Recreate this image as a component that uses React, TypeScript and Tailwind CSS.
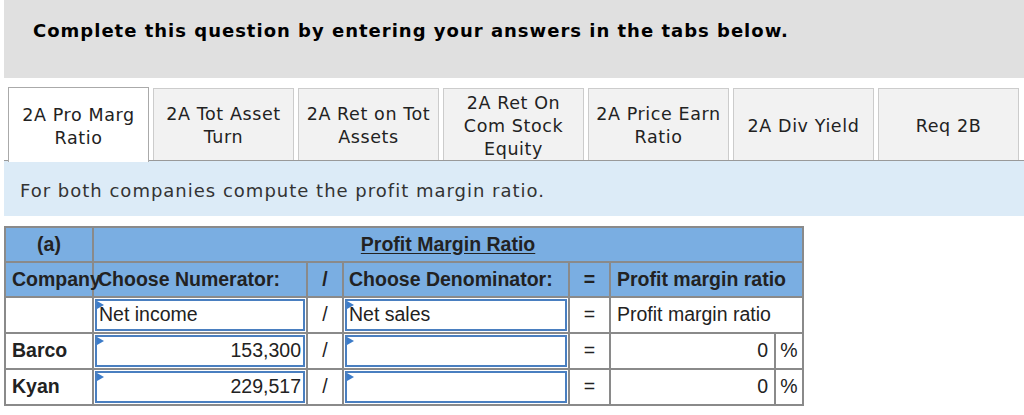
import React from "react";

const tabs = [
  "2A Pro Marg Ratio",
  "2A Tot Asset Turn",
  "2A Ret on Tot Assets",
  "2A Ret On Com Stock Equity",
  "2A Price Earn Ratio",
  "2A Div Yield",
  "Req 2B",
];

function Marker() {
  return (
    <span className="absolute left-0 top-0 w-0 h-0 border-t-[4px] border-b-[4px] border-l-[7px] border-t-transparent border-b-transparent border-l-[#3d7cc9]" />
  );
}

function Input({ text, align = "left" }: { text?: string; align?: "left" | "right" }) {
  return (
    <div
      className={`relative mx-[1px] h-[32px] border-2 border-[#4a7fc0] bg-white flex items-center px-[2px] ${
        align === "right" ? "justify-end" : "justify-start"
      }`}
    >
      <Marker />
      <span>{text}</span>
    </div>
  );
}

export default function App() {
  const cell = "border-2 border-[#8a8a8a] h-[35px] p-0";
  const dcell = "border-2 border-[#8a8a8a] h-[36px] p-0";
  return (
    <div className="w-[1024px] h-[415px] overflow-hidden bg-white" style={{ fontFamily: '"DejaVu Sans", Verdana, sans-serif' }}>
      <div className="ml-[4px] h-[78px] bg-[#e0e0e0] pl-[29px] pt-[19px]">
        <div className="font-bold text-[18px] tracking-[1px] text-black leading-[24px]">
          Complete this question by entering your answers in the tabs below.
        </div>
      </div>

      <div className="mt-[10px] ml-[4px] flex items-end gap-[4px] pl-[4px] border-b border-[#999] h-[73px]">
        {tabs.map((t, i) => (
          <div
            key={t}
            className={
              i === 0
                ? "relative z-10 mb-[-2px] w-[141px] h-[75px] bg-white border border-[#aaa] border-b-0 flex items-center justify-center text-center text-[17.5px] tracking-[0.6px] leading-[23px] text-[#222] px-[6px] pt-[3px]"
                : "w-[141px] h-[72px] bg-[#f2f2f2] border border-[#ccc] border-b-0 flex items-center justify-center text-center text-[17.5px] tracking-[0.6px] leading-[23px] text-[#222] px-[6px] pt-[3px]"
            }
          >
            {t}
          </div>
        ))}
      </div>

      <div className="ml-[4px] h-[55px] bg-[#dcebf7] pl-[16px] pt-[3px] flex items-center text-[18px] tracking-[1px] text-[#333]">
        For both companies compute the profit margin ratio.
      </div>

      <table
        className="mt-[10px] ml-[4px] w-[798px] table-fixed border-collapse text-[19.5px] text-[#222]"
        style={{ fontFamily: '"Liberation Sans", Arial, sans-serif' }}
      >
        <colgroup>
          <col className="w-[88px]" />
          <col className="w-[214px]" />
          <col className="w-[36px]" />
          <col className="w-[226px]" />
          <col className="w-[41px]" />
          <col className="w-[165px]" />
          <col className="w-[28px]" />
        </colgroup>
        <tbody>
          <tr className="bg-[#7aaee2] font-bold">
            <td className={`${cell} h-[33px] text-center`}>(a)</td>
            <td className={`${cell} h-[33px] text-center`} colSpan={6}>
              <span className="underline underline-offset-2">Profit Margin Ratio</span>
            </td>
          </tr>
          <tr className="bg-[#7aaee2] font-bold">
            <td className={`${cell} pl-[6px] whitespace-nowrap overflow-visible`}>Company</td>
            <td className={`${cell} pl-[4px] whitespace-nowrap`}>Choose Numerator:</td>
            <td className={`${cell} text-center`}>/</td>
            <td className={`${cell} pl-[5px] whitespace-nowrap`}>Choose Denominator:</td>
            <td className={`${cell} text-center`}>=</td>
            <td className={`${cell} pl-[6px] whitespace-nowrap`} colSpan={2}>Profit margin ratio</td>
          </tr>
          <tr className="bg-white">
            <td className={dcell}></td>
            <td className={dcell}><Input text="Net income" /></td>
            <td className={`${dcell} text-center`}>/</td>
            <td className={dcell}><Input text="Net sales" /></td>
            <td className={`${dcell} text-center`}>=</td>
            <td className={`${dcell} pl-[6px] whitespace-nowrap`} colSpan={2}>Profit margin ratio</td>
          </tr>
          {[
            ["Barco", "153,300"],
            ["Kyan", "229,517"],
          ].map(([name, val]) => (
            <tr key={name} className="bg-white">
              <td className={`${dcell} pl-[6px] font-bold`}>{name}</td>
              <td className={dcell}><Input text={val} align="right" /></td>
              <td className={`${dcell} text-center`}>/</td>
              <td className={dcell}><Input /></td>
              <td className={`${dcell} text-center`}>=</td>
              <td className={`${dcell} text-right pr-[6px]`}>0</td>
              <td className={`${dcell} text-center`}>%</td>
            </tr>
          ))}
        </tbody>
      </table>
    </div>
  );
}
